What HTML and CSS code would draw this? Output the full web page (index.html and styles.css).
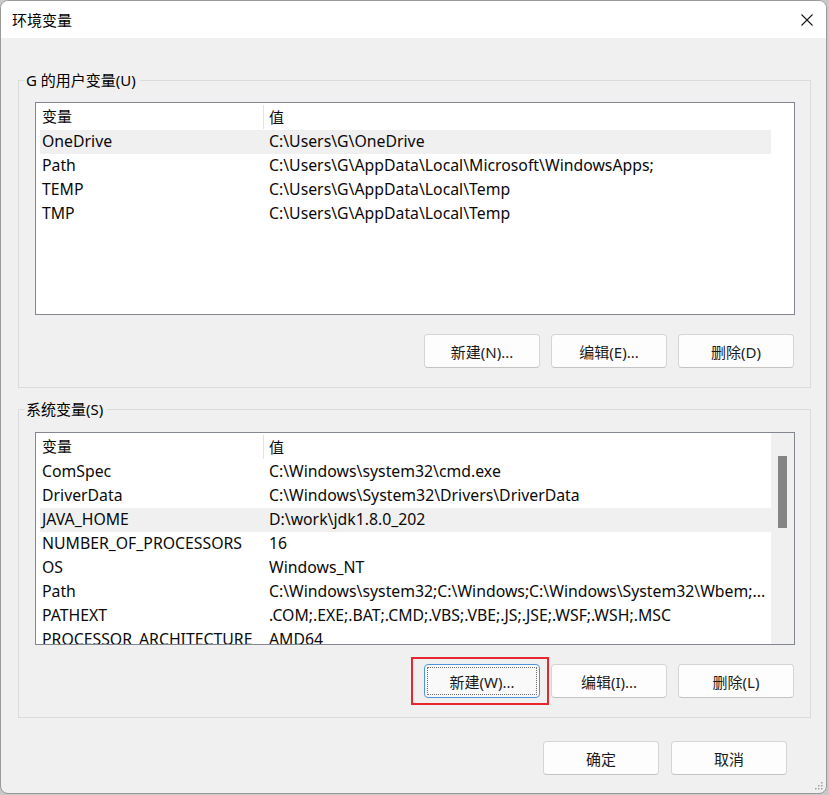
FILE: index.html
```html
<html lang="zh-CN">
<head>
    <meta charset="utf-8">
    <link rel="stylesheet" href="styles.css">
</head>
<body>
    <div class="window">
        <div class="titlebar">
            <span class="title">环境变量</span>
            <svg class="close" width="12" height="12" viewBox="0 0 12 12">
                <path d="M0.5 0.5 L11.5 11.5 M11.5 0.5 L0.5 11.5" stroke="#1a1a1a" stroke-width="1.1" fill="none"/>
            </svg>
        </div>

        <div class="content">
            <!-- user variables -->
            <fieldset class="group">
                <legend>G 的用户变量(U)</legend>
                <div class="list">
                    <div class="rows">
                        <div class="row head"><span class="name">变量</span><span class="value">值</span></div>
                        <div class="row selected"><span class="name">OneDrive</span><span class="value">C:\Users\G\OneDrive</span></div>
                        <div class="row"><span class="name">Path</span><span class="value">C:\Users\G\AppData\Local\Microsoft\WindowsApps;</span></div>
                        <div class="row"><span class="name">TEMP</span><span class="value">C:\Users\G\AppData\Local\Temp</span></div>
                        <div class="row"><span class="name">TMP</span><span class="value">C:\Users\G\AppData\Local\Temp</span></div>
                    </div>
                    <div class="side"></div>
                </div>
                <div class="buttons">
                    <button class="btn">新建(N)...</button>
                    <button class="btn">编辑(E)...</button>
                    <button class="btn">删除(D)</button>
                </div>
            </fieldset>

            <!-- system variables -->
            <fieldset class="group second">
                <legend>系统变量(S)</legend>
                <div class="list">
                    <div class="rows">
                        <div class="row head"><span class="name">变量</span><span class="value">值</span></div>
                        <div class="row"><span class="name">ComSpec</span><span class="value">C:\Windows\system32\cmd.exe</span></div>
                        <div class="row"><span class="name">DriverData</span><span class="value">C:\Windows\System32\Drivers\DriverData</span></div>
                        <div class="row selected"><span class="name">JAVA_HOME</span><span class="value">D:\work\jdk1.8.0_202</span></div>
                        <div class="row"><span class="name">NUMBER_OF_PROCESSORS</span><span class="value">16</span></div>
                        <div class="row"><span class="name">OS</span><span class="value">Windows_NT</span></div>
                        <div class="row"><span class="name">Path</span><span class="value">C:\Windows\system32;C:\Windows;C:\Windows\System32\Wbem;...</span></div>
                        <div class="row"><span class="name">PATHEXT</span><span class="value">.COM;.EXE;.BAT;.CMD;.VBS;.VBE;.JS;.JSE;.WSF;.WSH;.MSC</span></div>
                        <div class="row"><span class="name">PROCESSOR_ARCHITECTURE</span><span class="value">AMD64</span></div>
                    </div>
                    <div class="side scrollbar">
                        <div class="thumb"></div>
                    </div>
                </div>
                <div class="buttons">
                    <span class="marked">
                        <button class="btn focused">新建(W)...</button>
                        <span class="red-box"></span>
                    </span>
                    <button class="btn">编辑(I)...</button>
                    <button class="btn">删除(L)</button>
                </div>
            </fieldset>

            <div class="buttons dialog-buttons">
                <button class="btn">确定</button>
                <button class="btn">取消</button>
            </div>
        </div>

        <svg class="grip" width="10" height="10" viewBox="0 0 10 10">
            <rect x="8" y="2" width="1.5" height="1.5" fill="#a0a0a0"/>
            <rect x="5" y="5" width="1.5" height="1.5" fill="#a0a0a0"/>
            <rect x="8" y="5" width="1.5" height="1.5" fill="#a0a0a0"/>
            <rect x="2" y="8" width="1.5" height="1.5" fill="#a0a0a0"/>
            <rect x="5" y="8" width="1.5" height="1.5" fill="#a0a0a0"/>
            <rect x="8" y="8" width="1.5" height="1.5" fill="#a0a0a0"/>
        </svg>
    </div>
</body>
</html>
```

FILE: styles.css
```css
body {
    margin: 0;
    padding: 0;
    background-color: #c9c9c9;
    font-family: "Noto Sans", "Noto Sans CJK SC", sans-serif;
    font-size: 15px;
    color: #000;
}
.window {
    position: relative;
    width: 827px;
    height: 794px;
    box-sizing: border-box;
    border: 1px solid #9a9a9a;
    border-radius: 8px;
    background-color: #f0f0f0;
    overflow: hidden;
}
.titlebar {
    height: 37px;
    background-color: #fff;
    display: flex;
    align-items: center;
    justify-content: space-between;
    padding: 0 13px 0 11px;
}
.title {
    font-size: 15px;
    line-height: 20px;
}
.content {
    padding: 0 15px 0 17px;
}
.group {
    margin: 32px 0 0 0;
    padding: 12px 15px 19px 6px;
    border: 1px solid #dcdcdc;
    min-inline-size: 0;
}
.group.second {
    margin-top: 11px;
    padding-top: 13px;
}
.group legend {
    padding: 0 4px 0 1px;
    line-height: 20px;
}
.list {
    margin-left: 10px;
    height: 213px;
    box-sizing: border-box;
    border: 1px solid #828790;
    background-color: #fff;
    display: flex;
    overflow: hidden;
}
.rows {
    width: 731px;
    padding-left: 4px;
    flex: none;
    font-size: 15.8px;
    color: #0a0a0a;
}
.row {
    display: grid;
    grid-template-columns: 223px 1fr;
    height: 24px;
    line-height: 23px;
    white-space: nowrap;
}
.row .name {
    padding-left: 2px;
    overflow: hidden;
}
.row .value {
    padding-left: 6px;
    overflow: hidden;
}
.row.head {
    height: 27px;
    line-height: 26px;
    font-size: 15px;
}
.row.head .value {
    border-left: 1px solid #e3e3e3;
    padding-left: 5px;
    margin: 2px 0 1px 0;
    line-height: 24px;
}
.row.selected {
    background-color: #f0f0f0;
}
.side {
    flex: 1;
}
.scrollbar {
    background-color: #f0f0f0;
    padding: 23px 0 0 7px;
}
.thumb {
    width: 9px;
    height: 72px;
    background-color: #858585;
}
.buttons {
    display: flex;
    justify-content: flex-end;
    gap: 11px;
    margin: 19px 1px 0 0;
}
.btn {
    width: 116px;
    height: 34px;
    box-sizing: border-box;
    font-family: "Noto Sans", "Noto Sans CJK SC", sans-serif;
    font-size: 15px;
    color: #1b1b1b;
    background-color: #fdfdfd;
    border: 1px solid #d5d5d5;
    border-bottom-color: #c4c4c4;
    border-radius: 4px;
    padding: 0;
}
.marked {
    position: relative;
    display: flex;
}
.btn.focused {
    border: 1px solid #4f93d8;
    outline: 1px dotted #6a6a6a;
    outline-offset: -4px;
    background-color: #f9f9f9;
}
.red-box {
    position: absolute;
    left: -13px;
    right: -9px;
    top: -7px;
    bottom: -7px;
    border: 2px solid #e8262d;
}
.dialog-buttons {
    gap: 12px;
    margin: 23px 24px 0 0;
}
.grip {
    position: absolute;
    right: 3px;
    bottom: 3px;
}
```
